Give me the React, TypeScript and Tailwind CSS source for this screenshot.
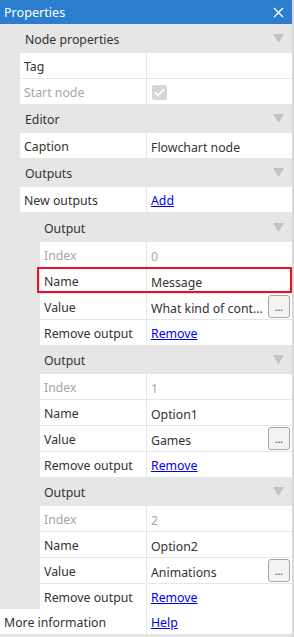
import { ReactNode } from 'react'

type RowProps = {
  label: string
  indent?: 0 | 20 | 40
  disabled?: boolean
  children?: ReactNode
  highlight?: boolean
  last?: boolean
}

function Triangle() {
  return (
    <svg width="11" height="9" viewBox="0 0 11 9" className="shrink-0">
      <path d="M0 0 L11 0 L5.5 9 Z" fill="#c2c2c2" />
    </svg>
  )
}

function GroupHeader({ title, indent, tall }: { title: string; indent: 20 | 40; tall?: boolean }) {
  return (
    <div
      className={`flex items-center justify-between pr-[8px] ${tall ? 'h-[30px]' : 'h-[29px]'} ${indent === 20 ? 'pl-[25px]' : 'pl-[44px]'}`}
    >
      <span className="text-[#333] pt-[4px]">{title}</span>
      <Triangle />
    </div>
  )
}

function Row({ label, indent = 20, disabled, children, highlight, last }: RowProps) {
  const ml = indent === 0 ? 'ml-0' : indent === 20 ? 'ml-[20px]' : 'ml-[40px]'
  const tone = disabled ? 'text-[#a6a6a6]' : 'text-[#333]'
  return (
    <div className={`relative flex bg-white ${ml} ${last ? 'h-[25px]' : 'h-[26px] border-b border-[#e6e6e6]'}`}>
      <div className={`flex-1 min-w-0 flex items-center pl-[4px] pt-[4px] whitespace-nowrap ${tone}`}>
        {label}
      </div>
      <div className={`w-[146px] shrink-0 flex items-center pl-[4px] border-l border-[#e6e6e6] ${tone}`}>
        {children}
      </div>
      {highlight && (
        <div className="absolute -left-[3px] -top-[1px] right-0 bottom-0 border-2 border-[#e81123] pointer-events-none" />
      )}
    </div>
  )
}

function Text({ children }: { children: ReactNode }) {
  return <span className="pt-[4px] leading-[17px] truncate">{children}</span>
}

function Link({ text }: { text: string }) {
  return <span className="pt-[4px] text-[#0000ee] underline">{text}</span>
}

function ValueWithButton({ text }: { text: string }) {
  return (
    <div className="flex items-center w-full min-w-0 gap-[3px] pr-[2px]">
      <span className="flex-1 min-w-0 truncate pt-[4px] leading-[17px]">{text}</span>
      <span className="w-[22px] h-[23px] shrink-0 rounded-[3px] border border-[#a6a6a6] bg-[#f3f3f3] flex items-end justify-center pb-[5px] text-[10px] leading-none text-[#333]">
        ...
      </span>
    </div>
  )
}

function Checkbox() {
  return (
    <span className="w-[15px] h-[15px] ml-[1px] mt-[2px] rounded-[2px] bg-[#d6d6d6] flex items-center justify-center">
      <svg width="11" height="9" viewBox="0 0 11 9">
        <path d="M1 4.5 L4 7.5 L10 1" fill="none" stroke="#fff" strokeWidth="1.8" />
      </svg>
    </span>
  )
}

function OutputGroup({
  index,
  name,
  value,
  highlight,
  tall,
}: {
  index: number
  name: string
  value: string
  highlight?: boolean
  tall?: boolean
}) {
  return (
    <div>
      <GroupHeader title="Output" indent={40} tall={tall} />
      <Row label="Index" indent={40} disabled>
        <Text>{index}</Text>
      </Row>
      <Row label="Name" indent={40} highlight={highlight}>
        <Text>{name}</Text>
      </Row>
      <Row label="Value" indent={40}>
        <ValueWithButton text={value} />
      </Row>
      <Row label="Remove output" indent={40} last>
        <Link text="Remove" />
      </Row>
    </div>
  )
}

export default function App() {
  return (
    <div
      className="w-[294px] h-[637px] bg-[#e6e6e6] border-r-2 border-[#d9d9d9] overflow-hidden text-[12.3px] leading-none"
      style={{ fontFamily: '"Noto Sans", "Open Sans", sans-serif' }}
    >
      {/* Title bar */}
      <div className="h-[24px] bg-[#2b7dce] flex items-center justify-between pl-[4px] pr-[8px] text-white text-[12.6px]">
        <span className="pt-[2px]">Properties</span>
        <svg width="11" height="11" viewBox="0 0 11 11">
          <path d="M1 1 L10 10 M10 1 L1 10" stroke="#fff" strokeWidth="1.4" />
        </svg>
      </div>

      <GroupHeader title="Node properties" indent={20} />
      <Row label="Tag" />
      <Row label="Start node" disabled last>
        <Checkbox />
      </Row>

      <GroupHeader title="Editor" indent={20} />
      <Row label="Caption" last>
        <Text>Flowchart node</Text>
      </Row>

      <GroupHeader title="Outputs" indent={20} />
      <Row label="New outputs" last>
        <Link text="Add" />
      </Row>

      <OutputGroup index={0} name="Message" value="What kind of content do you like?" highlight tall />
      <OutputGroup index={1} name="Option1" value="Games" />
      <OutputGroup index={2} name="Option2" value="Animations" />

      <Row label="More information" indent={0}>
        <Link text="Help" />
      </Row>
    </div>
  )
}
